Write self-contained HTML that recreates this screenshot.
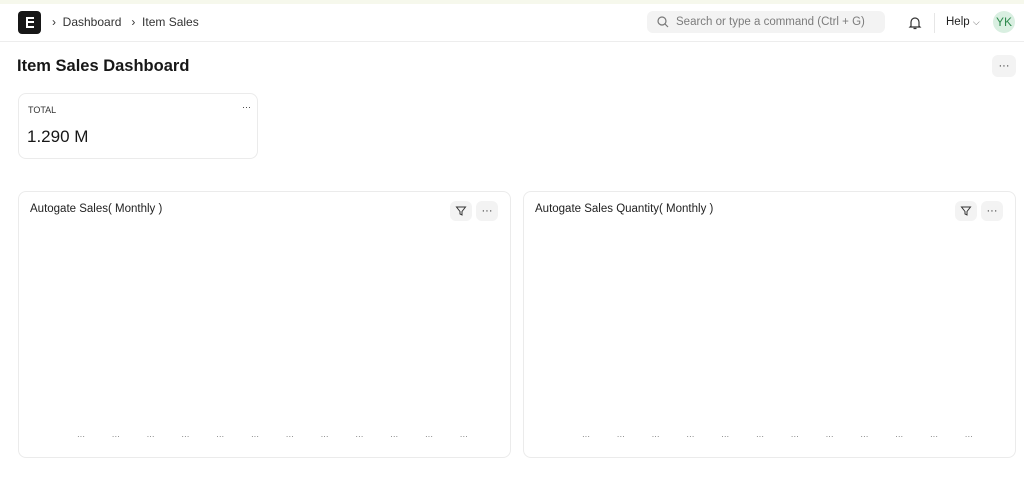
<!DOCTYPE html><html><head><meta charset="utf-8"><style>
*{box-sizing:border-box;margin:0;padding:0}
body{width:1024px;height:478px;background:#fff;font-family:"Liberation Sans",sans-serif;color:#1f272e;position:relative;overflow:hidden}
.a{position:absolute}
.strip{left:0;top:0;width:1024px;height:4px;background:#f6f8ec}
.hdr{left:0;top:4px;width:1024px;height:38px;border-bottom:1px solid #ededed}
.logo{left:18px;top:11px;width:23px;height:23px;background:#171717;border-radius:4px}
.bc{top:15px;font-size:12px;color:#333}
.search{left:647px;top:11px;width:238px;height:22px;background:#f3f3f3;border-radius:6px;font-size:11.5px;color:#7c7c7c;padding:5px 0 0 29px}
.card{border:1px solid #ebebeb;border-radius:8px;background:#fff}
.btn{width:22px;height:20px;background:#f3f3f3;border-radius:6px;font-size:11px;text-align:center;line-height:20px;color:#333}
.dot{font-size:8px;color:#666;top:432px}
</style></head><body>
<div class="a strip"></div>
<div class="a hdr"></div>
<div class="a logo"><div class="a" style="left:8px;top:6px;width:8px;height:11px;border:2px solid #fff;border-right:none"></div><div class="a" style="left:10px;top:10px;width:6px;height:2px;background:#fff"></div></div>
<div class="a bc" style="left:52px">›&nbsp;&nbsp;Dashboard&nbsp;&nbsp;&nbsp;›&nbsp;&nbsp;Item Sales</div>
<div class="a search">Search or type a command (Ctrl + G)</div>
<svg class="a" style="left:657px;top:16px" width="12" height="12" viewBox="0 0 12 12"><circle cx="5" cy="5" r="4" fill="none" stroke="#777" stroke-width="1.2"/><path d="M8 8l3 3" stroke="#777" stroke-width="1.2"/></svg>
<svg class="a" style="left:908px;top:15px" width="14" height="15" viewBox="0 0 14 15"><path d="M3 11V7a4 4 0 0 1 8 0v4l1 1H2z M5.5 13.5h3" fill="none" stroke="#333" stroke-width="1.2"/></svg>
<div class="a" style="left:934px;top:13px;width:1px;height:20px;background:#e6e6e6"></div>
<div class="a" style="left:946px;top:16px;font-size:11.5px;color:#222">Help <span style="font-size:9px;color:#666">⌵</span></div>
<div class="a" style="left:993px;top:11px;width:22px;height:22px;border-radius:50%;background:#d9efe1;color:#2f8a4e;font-size:12px;text-align:center;line-height:22px">YK</div>
<div class="a" style="left:17px;top:57px;font-size:16.5px;font-weight:bold;color:#171717">Item Sales Dashboard</div>
<div class="a btn" style="left:992px;top:55px;width:24px;height:22px;line-height:22px">···</div>
<div class="a card" style="left:18px;top:93px;width:240px;height:66px"></div>
<div class="a" style="left:28px;top:105px;font-size:9px;color:#333">TOTAL</div>
<div class="a" style="left:242px;top:102px;font-size:9px;color:#333">···</div>
<div class="a" style="left:27px;top:127px;font-size:17px;color:#171717">1.290 M</div>
<div class="a card" style="left:18px;top:191px;width:493px;height:267px"></div>
<div class="a card" style="left:523px;top:191px;width:493px;height:267px"></div>
<div class="a" style="left:30px;top:203px;font-size:11.5px;color:#222">Autogate Sales( Monthly )</div>
<div class="a" style="left:535px;top:203px;font-size:11.5px;color:#222">Autogate Sales Quantity( Monthly )</div>
<div class="a btn" style="left:450px;top:201px"><svg width="12" height="12" viewBox="0 0 12 12" style="margin-top:4px;display:block;margin-left:5px"><path d="M1.5 2h9L7 6.5V10L5 9V6.5z" fill="none" stroke="#333" stroke-width="1"/></svg></div>
<div class="a btn" style="left:476px;top:201px">···</div>
<div class="a btn" style="left:955px;top:201px"><svg width="12" height="12" viewBox="0 0 12 12" style="margin-top:4px;display:block;margin-left:5px"><path d="M1.5 2h9L7 6.5V10L5 9V6.5z" fill="none" stroke="#333" stroke-width="1"/></svg></div>
<div class="a btn" style="left:981px;top:201px">···</div>
<div id="d"></div>
<script>
var h='';for(var i=0;i<12;i++){h+='<div class="a dot" style="left:'+(77+i*34.8)+'px">···</div><div class="a dot" style="left:'+(582+i*34.8)+'px">···</div>';}
document.getElementById('d').innerHTML=h;
</script>
</body></html>
